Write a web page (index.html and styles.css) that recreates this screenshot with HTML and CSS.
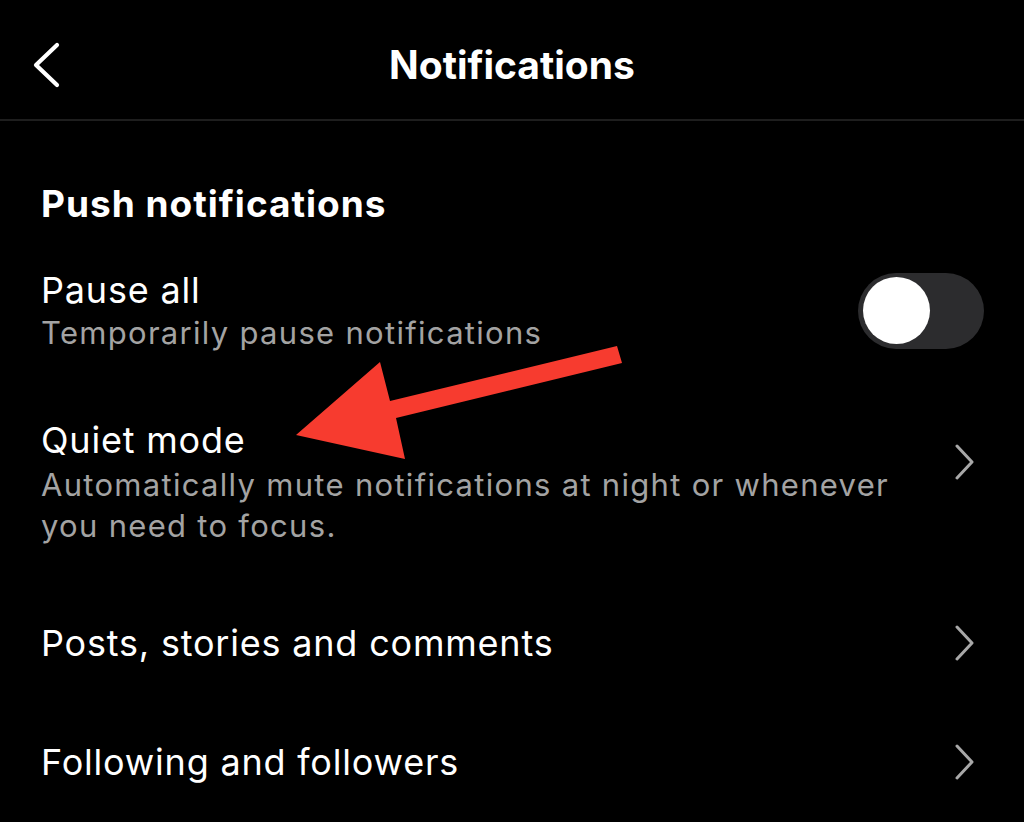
FILE: index.html
```html
<!DOCTYPE html>
<html>
<head>
<meta charset="utf-8">
<link rel="stylesheet" href="styles.css">
</head>
<body>
<div class="screen">
  <header class="nav">
    <svg class="back" width="30" height="46" viewBox="0 0 30 46"><path d="M25 3 L4 23 L25 43" fill="none" stroke="#fff" stroke-width="4.2" stroke-linecap="round" stroke-linejoin="round"/></svg>
    <h1 class="title">Notifications</h1>
  </header>
  <main class="content">
    <h2 class="section">Push notifications</h2>
    <div class="row row-pause">
      <div class="text">
        <div class="label">Pause all</div>
        <div class="sub">Temporarily pause notifications</div>
      </div>
      <div class="toggle"><div class="knob"></div></div>
    </div>
    <div class="row row-quiet">
      <div class="text">
        <div class="label">Quiet mode</div>
        <div class="sub">Automatically mute notifications at night or whenever you need to focus.</div>
      </div>
      <svg class="chev chev-top" width="20" height="36" viewBox="0 0 20 36"><path d="M2 2 L17 18 L2 34" fill="none" stroke="#a8a8a8" stroke-width="3" stroke-linecap="round" stroke-linejoin="round"/></svg>
    </div>
    <div class="row row-link">
      <div class="label">Posts, stories and comments</div>
      <svg class="chev" width="20" height="36" viewBox="0 0 20 36"><path d="M2 2 L17 18 L2 34" fill="none" stroke="#a8a8a8" stroke-width="3" stroke-linecap="round" stroke-linejoin="round"/></svg>
    </div>
    <div class="row row-link">
      <div class="label">Following and followers</div>
      <svg class="chev" width="20" height="36" viewBox="0 0 20 36"><path d="M2 2 L17 18 L2 34" fill="none" stroke="#a8a8a8" stroke-width="3" stroke-linecap="round" stroke-linejoin="round"/></svg>
    </div>
  </main>
  <svg class="annot" width="1024" height="822" viewBox="0 0 1024 822">
    <polygon points="296,435 380,362 390,401 617,346 622,363 396,418 405,459" fill="#f73b2f"/>
  </svg>
</div>
</body>
</html>
```

FILE: styles.css
```css
html, body {
  margin: 0;
  padding: 0;
  background: #000;
}
.screen {
  position: relative;
  width: 1024px;
  height: 822px;
  overflow: hidden;
  background: #000;
  color: #fff;
  font-family: Inter, "Noto Sans", "Liberation Sans", sans-serif;
}
.nav {
  position: relative;
  box-sizing: border-box;
  height: 121px;
  border-bottom: 2px solid #1e1e1e;
  display: flex;
  align-items: center;
  justify-content: center;
}
.back {
  position: absolute;
  left: 32px;
  top: 42px;
}
.title {
  margin: 0;
  padding-top: 11px;
  font-size: 39px;
  font-weight: 700;
  line-height: 44px;
  letter-spacing: 0;
}
.content {
  padding: 0 40px 0 41px;
}
.section {
  margin: 61px 0 0 0;
  font-size: 37px;
  font-weight: 700;
  line-height: 44px;
  letter-spacing: 1px;
}
.row {
  display: flex;
  align-items: center;
  justify-content: space-between;
}
.text {
  flex: 1;
}
.label {
  font-size: 36px;
  line-height: 44px;
  font-weight: 400;
  letter-spacing: 0.8px;
}
.sub {
  font-size: 31px;
  line-height: 41px;
  color: #a3a3a3;
  letter-spacing: 1.3px;
}
.row-pause {
  margin-top: 42px;
}
.row-quiet {
  margin-top: 65px;
  align-items: flex-start;
}
.row-quiet .sub {
  max-width: 890px;
  padding-top: 2px;
}
.chev-top {
  margin-top: 26px;
  margin-right: 9px;
}
.row-link {
  margin-top: 75px;
}
.row-link .chev {
  margin-right: 9px;
}
.toggle {
  width: 126px;
  height: 76px;
  border-radius: 38px;
  background: #2c2c2e;
  display: flex;
  align-items: center;
  padding-left: 5px;
  box-sizing: border-box;
}
.knob {
  width: 67px;
  height: 67px;
  border-radius: 50%;
  background: #fff;
}
.annot {
  position: absolute;
  left: 0;
  top: 0;
  pointer-events: none;
}
```
